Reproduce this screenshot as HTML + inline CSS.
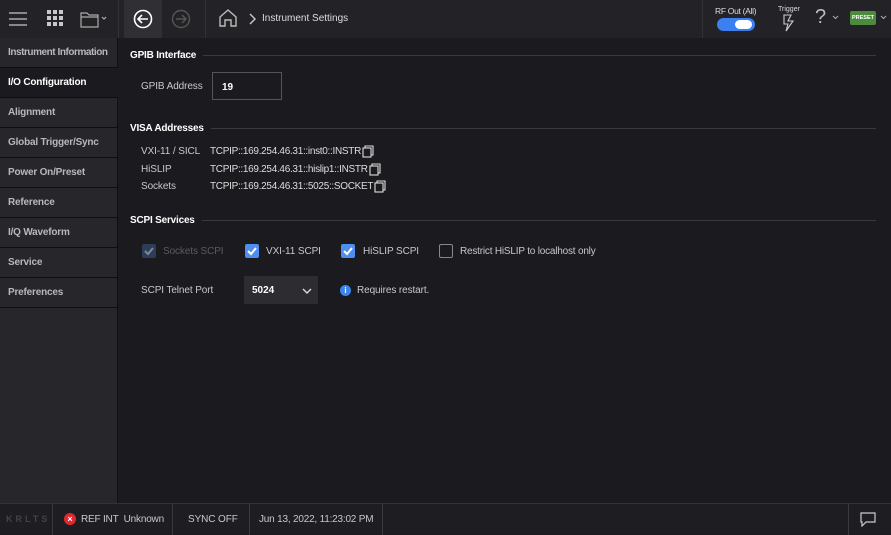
<!DOCTYPE html>
<html><head><style>
*{box-sizing:border-box;margin:0;padding:0}
body{width:891px;height:534px;background:#1b1b1f;font-family:"Liberation Sans",sans-serif;color:#d0d0d4;position:relative;overflow:hidden;font-size:10px}
.abs{position:absolute;white-space:nowrap}
#top{left:0;top:0;width:891px;height:38px;background:#232327}
#side{left:0;top:38px;width:118px;height:465px;background:#27272b;border-right:1px solid #111}
.item{height:30px;line-height:30px;padding-left:8px;font-weight:bold;font-size:10px;letter-spacing:-0.2px;color:#b8b8bc;border-bottom:1px solid #0e0e10;background:#27272b;white-space:nowrap;overflow:hidden}
.item.sel{background:#1b1b1f;color:#fff;margin-right:-1px}
.secrow{display:flex;align-items:center;width:746px;left:130px}
.sec{font-weight:bold;font-size:10px;color:#fff;letter-spacing:-0.2px}
.line{flex:1;height:1px;background:#3a3a3f;margin-left:7px}
.lbl{font-size:10px;color:#c8c8cc;letter-spacing:-0.1px}
.cb{width:14px;height:14px;border-radius:2px;background:#4d8ef0}
#status{left:0;top:503px;width:891px;height:31px;background:#1e1e22;border-top:1px solid #333}
.sdiv{top:0;width:1px;height:31px;background:#3a3a3e}
.addr{display:flex;align-items:center;height:17.5px}
.addr svg{margin-left:1px}
</style></head><body>
<div id="top" class="abs"></div>
<svg class="abs" style="left:9px;top:11px" width="18" height="16"><g stroke="#aaa" stroke-width="1.5"><line x1="0" y1="2" x2="18" y2="2"/><line x1="0" y1="8" x2="18" y2="8"/><line x1="0" y1="14" x2="18" y2="14"/></g></svg>
<svg class="abs" style="left:47px;top:10px" width="18" height="18" fill="#c8c8cc"><rect x="0" y="0" width="4" height="4"/><rect x="6" y="0" width="4" height="4"/><rect x="12" y="0" width="4" height="4"/><rect x="0" y="6" width="4" height="4"/><rect x="6" y="6" width="4" height="4"/><rect x="12" y="6" width="4" height="4"/><rect x="0" y="12" width="4" height="4"/><rect x="6" y="12" width="4" height="4"/><rect x="12" y="12" width="4" height="4"/></svg>
<svg class="abs" style="left:80px;top:10px" width="28" height="18" fill="none" stroke="#aaa" stroke-width="1.2"><path d="M1 3h6l2 2h9v12H1z"/><path d="M1 7h17"/><path d="M22 7l2 2 2-2"/></svg>
<div class="abs" style="left:118px;top:0;width:1px;height:38px;background:#333"></div>
<div class="abs" style="left:124px;top:0;width:38px;height:38px;background:#2f2f34"></div>
<svg class="abs" style="left:133px;top:9px" width="20" height="20" fill="none" stroke="#fff" stroke-width="1.6"><circle cx="10" cy="10" r="8.5"/><path d="M15 10H5M9 6l-4 4 4 4"/></svg>
<svg class="abs" style="left:171px;top:9px" width="20" height="20" fill="none" stroke="#555" stroke-width="1.4"><circle cx="10" cy="10" r="8.5"/><path d="M5 10h10M11 6l4 4-4 4"/></svg>
<div class="abs" style="left:205px;top:0;width:1px;height:38px;background:#333"></div>
<svg class="abs" style="left:218px;top:8px" width="20" height="20" fill="none" stroke="#bbb" stroke-width="1.4"><path d="M2 9L10 2l8 7v9h-5v-6H7v6H2z"/></svg>
<svg class="abs" style="left:248px;top:13px" width="8" height="12" fill="none" stroke="#ccc" stroke-width="1.4"><path d="M2 1l5 5-5 5"/></svg>
<div class="abs" style="left:262px;top:13px;font-size:10px;color:#ddd">Instrument Settings</div>
<div class="abs" style="left:702px;top:0;width:1px;height:38px;background:#333"></div>
<div class="abs" style="left:715px;top:6px;font-size:8.5px;color:#ddd;letter-spacing:-0.3px">RF Out (All)</div>
<div class="abs" style="left:717px;top:18px;width:38px;height:13px;border-radius:7px;background:#3b7ff0"><div style="position:absolute;right:3px;top:2px;width:17px;height:9px;border-radius:5px;background:#fff"></div></div>
<div class="abs" style="left:778px;top:6px;font-size:7px;color:#ddd">Trigger</div>
<svg class="abs" style="left:782px;top:14px" width="14" height="18" fill="none" stroke="#ccc" stroke-width="1.1"><path d="M2 1h7L6 7h5L4 17l2-7H2z"/></svg>
<div class="abs" style="left:815px;top:6px;font-size:20px;color:#bbb">?</div>
<svg class="abs" style="left:832px;top:15px" width="7" height="5" fill="none" stroke="#aaa"><path d="M1 1l2.5 2.5L6 1"/></svg>
<div class="abs" style="left:850px;top:11px;width:26px;height:14px;background:#4c8a3c;border-radius:2px;font-size:5.5px;font-weight:bold;color:#fff;text-align:center;line-height:14px">PRESET</div>
<svg class="abs" style="left:880px;top:15px" width="7" height="5" fill="none" stroke="#aaa"><path d="M1 1l2.5 2.5L6 1"/></svg>

<div id="side" class="abs">
<div class="item" style="letter-spacing:-0.45px">Instrument Information</div>
<div class="item sel">I/O Configuration</div>
<div class="item">Alignment</div>
<div class="item">Global Trigger/Sync</div>
<div class="item">Power On/Preset</div>
<div class="item">Reference</div>
<div class="item">I/Q Waveform</div>
<div class="item">Service</div>
<div class="item">Preferences</div>
</div>

<div class="abs secrow" style="top:50px"><span class="sec">GPIB Interface</span><div class="line"></div></div>
<div class="abs lbl" style="left:141px;top:81px">GPIB Address</div>
<div class="abs" style="left:212px;top:72px;width:70px;height:28px;border:1px solid #555;background:#1b1b1f;font-size:10px;font-weight:bold;color:#fff;padding:9px 0 0 9px">19</div>

<div class="abs secrow" style="top:123px"><span class="sec">VISA Addresses</span><div class="line"></div></div>
<div class="abs lbl" style="left:141px;top:143px;line-height:17.5px">VXI-11 / SICL<br>HiSLIP<br>Sockets</div>
<div class="abs lbl" style="left:210px;top:143px;color:#ddd;letter-spacing:-0.3px">
<div class="addr">TCPIP::169.254.46.31::inst0::INSTR<svg width="12" height="13" fill="none" stroke="#ddd" stroke-width="1.1"><path d="M3 3V1h8v9H9"/><rect x="1" y="3" width="8" height="9"/></svg></div>
<div class="addr">TCPIP::169.254.46.31::hislip1::INSTR<svg width="12" height="13" fill="none" stroke="#ddd" stroke-width="1.1"><path d="M3 3V1h8v9H9"/><rect x="1" y="3" width="8" height="9"/></svg></div>
<div class="addr">TCPIP::169.254.46.31::5025::SOCKET<svg width="12" height="13" fill="none" stroke="#ddd" stroke-width="1.1"><path d="M3 3V1h8v9H9"/><rect x="1" y="3" width="8" height="9"/></svg></div>
</div>

<div class="abs secrow" style="top:215px"><span class="sec">SCPI Services</span><div class="line"></div></div>

<div class="abs cb" style="left:142px;top:244px;background:#2c3d58"></div>
<svg class="abs" style="left:144px;top:246px" width="10" height="10" fill="none" stroke="#7f8899" stroke-width="2"><path d="M1 5l3 3 5-6"/></svg>
<div class="abs lbl" style="left:163px;top:246px;color:#5a5a60">Sockets SCPI</div>
<div class="abs cb" style="left:245px;top:244px"></div>
<svg class="abs" style="left:247px;top:246px" width="10" height="10" fill="none" stroke="#fff" stroke-width="2"><path d="M1 5l3 3 5-6"/></svg>
<div class="abs lbl" style="left:266px;top:246px">VXI-11 SCPI</div>
<div class="abs cb" style="left:341px;top:244px"></div>
<svg class="abs" style="left:343px;top:246px" width="10" height="10" fill="none" stroke="#fff" stroke-width="2"><path d="M1 5l3 3 5-6"/></svg>
<div class="abs lbl" style="left:363px;top:246px">HiSLIP SCPI</div>
<div class="abs" style="left:439px;top:244px;width:14px;height:14px;border:1px solid #888;border-radius:2px"></div>
<div class="abs lbl" style="left:460px;top:246px;letter-spacing:-0.2px">Restrict HiSLIP to localhost only</div>

<div class="abs lbl" style="left:141px;top:285px">SCPI Telnet Port</div>
<div class="abs" style="left:244px;top:276px;width:74px;height:28px;background:#2c2c31;font-size:10px;font-weight:bold;color:#fff;padding:9px 0 0 8px">5024</div>
<svg class="abs" style="left:302px;top:288px" width="10" height="6" fill="none" stroke="#ddd" stroke-width="1.4"><path d="M1 1l4 4 4-4"/></svg>
<div class="abs" style="left:340px;top:285px;width:11px;height:11px;border-radius:50%;background:#3b86e8;color:#fff;font-size:8px;font-weight:bold;text-align:center;line-height:11px">i</div>
<div class="abs lbl" style="left:357px;top:285px">Requires restart.</div>

<div id="status" class="abs">
<div class="abs" style="left:6px;top:10px;font-size:9px;letter-spacing:3px;color:#444;font-weight:bold">KRLTS</div>
<div class="abs sdiv" style="left:52px"></div>
<div class="abs" style="left:64px;top:9px;width:12px;height:12px;border-radius:50%;background:#e0282e;color:#fff;font-size:9px;text-align:center;line-height:12px;font-weight:bold">×</div>
<div class="abs lbl" style="left:81px;top:10px;letter-spacing:-0.2px">REF INT&nbsp; Unknown</div>
<div class="abs sdiv" style="left:172px"></div>
<div class="abs lbl" style="left:188px;top:10px">SYNC OFF</div>
<div class="abs sdiv" style="left:249px"></div>
<div class="abs lbl" style="left:259px;top:10px;letter-spacing:-0.2px">Jun 13, 2022, 11:23:02 PM</div>
<div class="abs sdiv" style="left:382px"></div>
<div class="abs sdiv" style="left:848px"></div>
<svg class="abs" style="left:860px;top:8px" width="16" height="15" fill="none" stroke="#ccc" stroke-width="1.2"><path d="M1 1h14v9H6l-4 4v-4H1z"/></svg>
</div>
</body></html>
